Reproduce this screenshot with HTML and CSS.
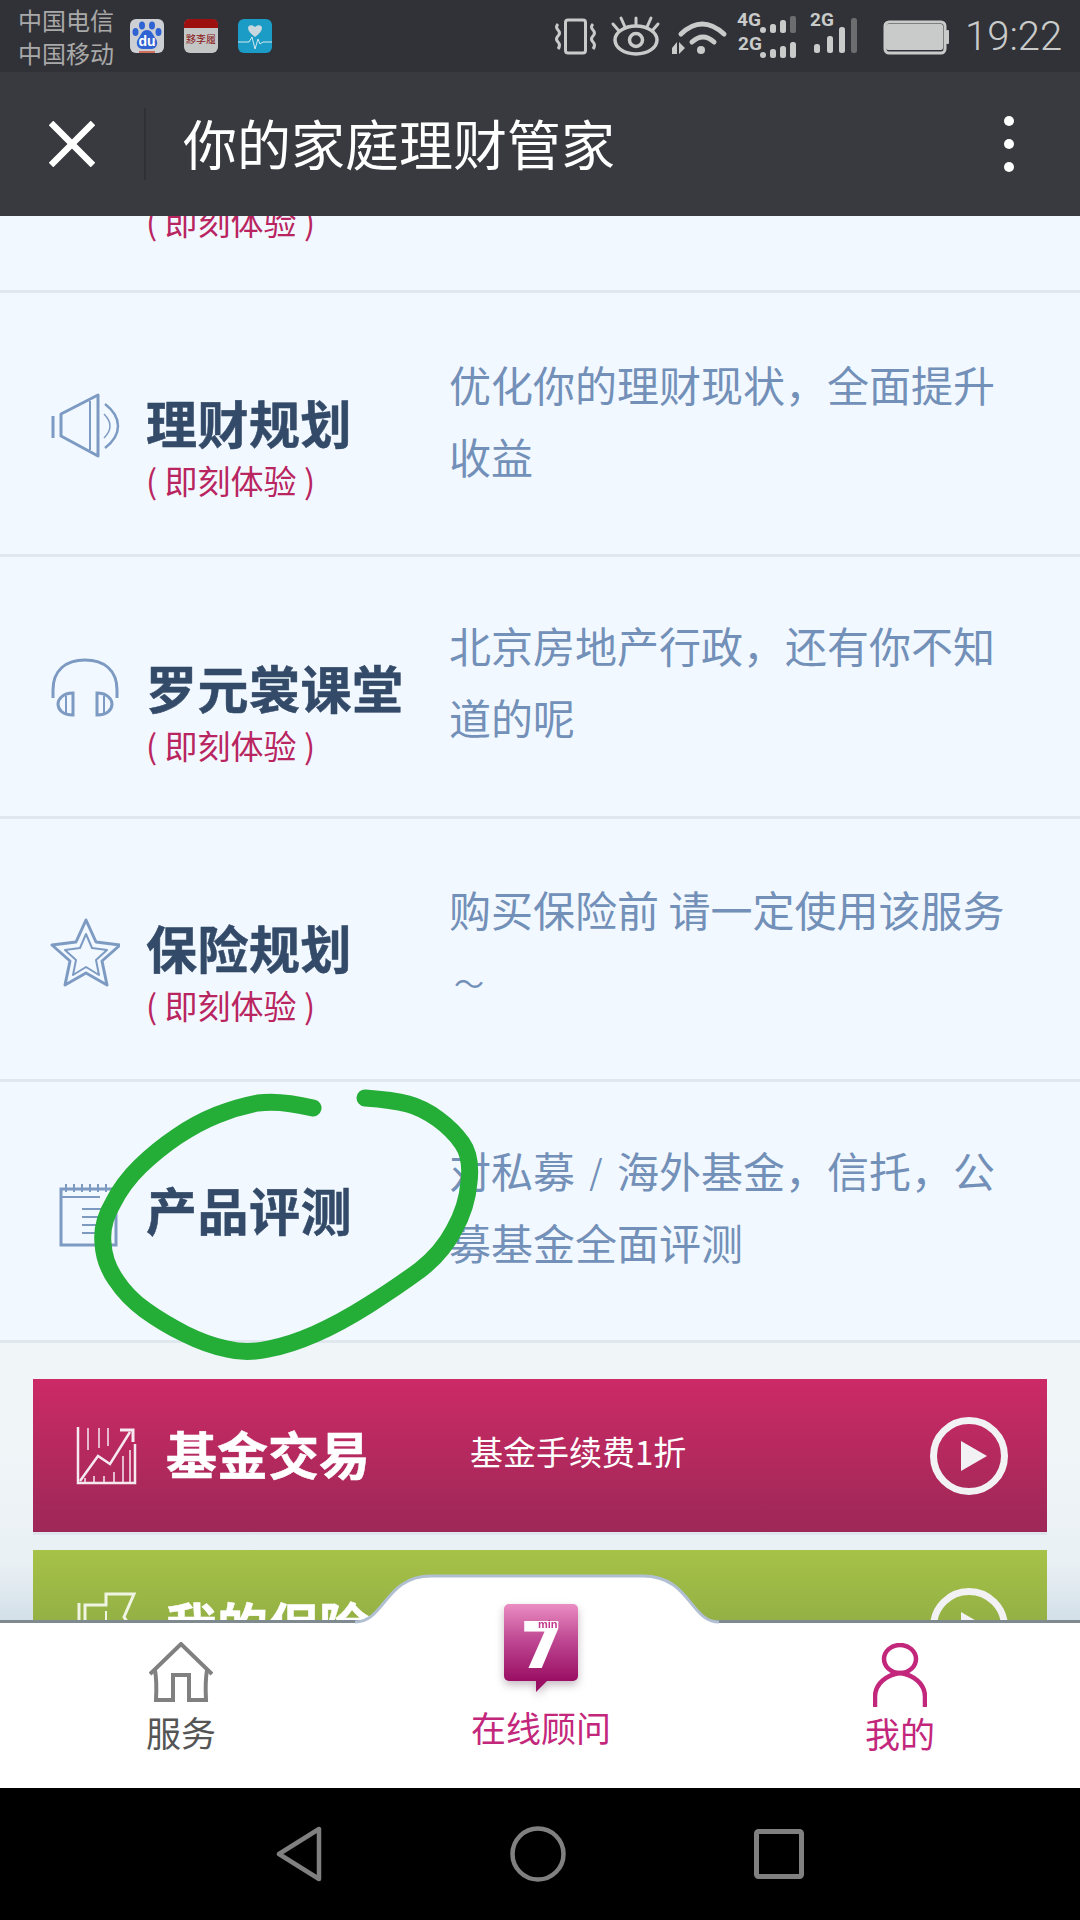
FILE: index.html
```html
<!DOCTYPE html>
<html lang="zh-CN">
<head>
<meta charset="utf-8">
<title>你的家庭理财管家</title>
<link rel="stylesheet" href="styles.css">
</head>
<body>
<div id="screen">

	<div id="statusBar">
		<div class="carrier"><span>中国电信</span><span>中国移动</span></div>
		<svg class="appIcon" viewBox="0 0 34 34">
			<rect width="34" height="34" rx="6" fill="#ccd0d4"/>
			<ellipse cx="5.5" cy="13" rx="3" ry="4" fill="#2f62d2"/>
			<ellipse cx="12" cy="6.5" rx="3" ry="4" fill="#2f62d2"/>
			<ellipse cx="22" cy="6.5" rx="3" ry="4" fill="#2f62d2"/>
			<ellipse cx="28.5" cy="13" rx="3" ry="4" fill="#2f62d2"/>
			<path d="M17 11C12 11 11 16 8 20C5 25 8 30 13 30H21C26 30 29 25 26 20C23 16 22 11 17 11Z" fill="#2f62d2"/>
			<text x="17" y="27" class="appDu">du</text>
			<rect x="9" y="32" width="16" height="2" fill="#d0705a"/>
		</svg>
		<svg class="appIcon" viewBox="0 0 34 34">
			<rect width="34" height="34" rx="6" fill="#c4c6c6"/>
			<path d="M0 9V6C0 2 2 0 6 0H28C32 0 34 2 34 6V9Z" fill="#9c1010"/>
			<text x="17" y="24" class="appCal">黟李履</text>
		</svg>
		<svg class="appIcon" viewBox="0 0 34 34">
			<rect width="34" height="34" rx="6" fill="#1a9cc6"/>
			<path d="M22 18C18 15 15 12 15 9C15 6 19 5 22 8C25 5 29 6 29 9C29 12 26 15 22 18Z" transform="translate(-5 0)" fill="#c9d8de"/>
			<path d="M0 23H11L14 18L17 30L20 20L22 25L25 23H34" fill="none" stroke="#d5e9f0" stroke-width="1"/>
		</svg>
		<div class="statusFill"></div>
		<svg class="statusIcons" viewBox="0 0 400 72">
			<g fill="none" stroke="#c9cbca" stroke-width="3">
				<rect x="15.5" y="20" width="20" height="33" rx="2.5"/>
				<path d="M8 24Q5 27 8 30Q11 33 8 36Q5 39 8 42Q11 45 8 49"/>
				<path d="M43 24Q40 27 43 30Q46 33 43 36Q40 39 43 42Q46 45 43 49"/>
				<ellipse cx="86" cy="40" rx="21" ry="14" stroke-width="3.5"/>
				<circle cx="86" cy="40" r="6.5" stroke-width="3.5"/>
				<path d="M71 18L75 27M86 18V25M101 18L97 27M63 24L69 31M108 24L102 31" stroke-width="3" stroke-linecap="round"/>
				<path d="M131 34Q152 14 174 34" stroke-width="5" stroke-linecap="round"/>
				<path d="M142 42Q153 32 164 42" stroke-width="5" stroke-linecap="round"/>
			</g>
			<g fill="#c9cbca">
				<circle cx="151" cy="50" r="4"/>
				<path d="M122 48L127 42V54H122ZM129 42L135 48L129 54Z"/>
				<text x="187" y="26" class="netType">4G</text>
				<text x="188" y="50" class="netType">2G</text>
				<text x="260" y="26" class="netType">2G</text>
				<circle cx="213" cy="30" r="3"/>
				<rect x="220" y="24" width="6" height="9" rx="2.5"/>
				<rect x="230" y="20" width="6" height="13" rx="2.5"/>
				<circle cx="213" cy="55" r="3"/>
				<rect x="220" y="49" width="6" height="9" rx="2.5"/>
				<rect x="230" y="46" width="6" height="12" rx="2.5"/>
				<rect x="240" y="42" width="6" height="16" rx="2.5"/>
				<rect x="264" y="44" width="6" height="9" rx="2.5"/>
				<rect x="277" y="36" width="6" height="17" rx="2.5"/>
				<rect x="289" y="27" width="6" height="26" rx="2.5"/>
				<rect x="336" y="24" width="57" height="26" rx="2"/>
				<rect x="396" y="30" width="3" height="14" rx="1"/>
			</g>
			<rect x="240" y="16" width="6" height="17" rx="2" fill="#6c6d6e"/>
			<rect x="301" y="18" width="6" height="35" rx="2.5" fill="#6c6d6e"/>
			<rect x="335" y="22" width="60" height="31" rx="4" fill="none" stroke="#c9cbca" stroke-width="3"/>
		</svg>
		<div class="clock">19:22</div>
	</div>

	<div id="titleBar">
		<svg class="closeIcon" viewBox="0 0 46 46"><path d="M2 2L44 44M44 2L2 44" stroke="#fff" stroke-width="6.5" fill="none"/></svg>
		<div class="titleDivider"></div>
		<div class="titleText">你的家庭理财管家</div>
		<div class="moreDots"><span></span><span></span><span></span></div>
	</div>

	<div id="content">
		<div class="row rowCut"><div class="rowTry">( 即刻体验 )</div></div>

		<div class="row">
			<svg class="rowIcon" viewBox="0 0 70 70" fill="none" stroke="#7d9bc2" stroke-width="3">
				<path d="M48 3V64L11 44V22Z" stroke-linejoin="round"/>
				<path d="M40 9V58" stroke-width="2"/>
				<path d="M3 24V46"/>
				<path d="M55 12Q68 22 68 34Q68 46 55 56" stroke-width="2.5"/>
				<path d="M54 22Q60 28 60 34Q60 40 54 46" stroke-width="1.5"/>
			</svg>
			<div class="rowHead">
				<div class="rowTitle">理财规划</div>
				<div class="rowTry">( 即刻体验 )</div>
			</div>
			<div class="rowDesc">优化你的理财现状，全面提升收益</div>
		</div>

		<div class="row rowShort">
			<svg class="rowIcon" viewBox="0 0 70 70" fill="none" stroke="#7d9bc2" stroke-width="3">
				<path d="M3 42V34C3 14 16 4 35 4C54 4 67 14 67 34V42"/>
				<path d="M23 37C12 37 8 44 8 48C8 53 12 59 23 59Z"/>
				<path d="M47 37C58 37 62 44 62 48C62 53 58 59 47 59Z"/>
				<path d="M16 40V57M54 40V57" stroke-width="2"/>
			</svg>
			<div class="rowHead">
				<div class="rowTitle">罗元裳课堂</div>
				<div class="rowTry">( 即刻体验 )</div>
			</div>
			<div class="rowDesc">北京房地产行政，还有你不知道的呢</div>
		</div>

		<div class="row rowMid">
			<svg class="rowIcon" viewBox="0 0 70 70" fill="none" stroke="#7d9bc2" stroke-width="3" stroke-linejoin="round">
				<path d="M36 2L46 24L70 27L52 43L57 67L36 55L15 67L20 43L2 27L26 24Z"/>
				<path d="M36 16L42 30L57 32L46 42L49 57L36 49L23 57L26 42L15 32L30 30Z" stroke-width="2"/>
			</svg>
			<div class="rowHead">
				<div class="rowTitle">保险规划</div>
				<div class="rowTry">( 即刻体验 )</div>
			</div>
			<div class="rowDesc">购买保险前 请一定使用该服务<span class="descTilde">～</span></div>
		</div>

		<div class="row rowLast">
			<svg class="rowIcon" viewBox="0 0 70 70" fill="none" stroke="#7d9bc2" stroke-width="3">
				<path d="M11 8H66V64H11Z"/>
				<path d="M11 16H50M32 28H60M32 36H60M32 44H60M32 52H50" stroke-width="2"/>
				<path d="M16 3V11M24 3V11M32 3V11M40 3V11M48 3V11M56 3V11" stroke-width="2"/>
			</svg>
			<div class="rowHead">
				<div class="rowTitle">产品评测</div>
			</div>
			<div class="rowDesc">对私募<span class="descSlash">/</span>海外基金，信托，公募基金全面评测</div>
		</div>

		<div class="bannerList">
			<div class="banner bannerRed">
				<svg class="bannerIcon" viewBox="0 0 60 60" fill="none" stroke="#f6e9ef" stroke-width="2.5">
					<path d="M2 1V57H59V18"/>
					<path d="M4 55L22 30L34 38L54 6"/>
					<path d="M44 4H57V16" stroke-width="3"/>
					<path d="M12 2V24M23 2V22M32 2V20M47 30V56M54 24V56M38 46V56M28 50V56M18 50V56M9 52V56" stroke-width="1.5"/>
				</svg>
				<div class="bannerTitle">基金交易</div>
				<div class="bannerSub">基金手续费1折</div>
				<svg class="playIcon" viewBox="0 0 78 78"><circle cx="39" cy="39" r="35.5" fill="none" stroke="#f2f2f4" stroke-width="7"/><path d="M31 24L57 39L31 54Z" fill="#f2f2f4"/></svg>
			</div>
			<div class="banner bannerGreen">
				<svg class="bannerIcon" viewBox="0 0 60 60" fill="none" stroke="#f0f4e2" stroke-width="3">
					<path d="M3 60V6M9 60V8H30V-3H58L48 20L60 38V60"/>
					<path d="M30 14V26" stroke-width="2"/>
				</svg>
				<div class="bannerTitle">我的保险</div>
				<div class="bannerSub">我的保单</div>
				<svg class="playIcon" viewBox="0 0 78 78"><circle cx="39" cy="39" r="35.5" fill="none" stroke="#f2f2f4" stroke-width="7"/><path d="M31 24L57 39L31 54Z" fill="#f2f2f4"/></svg>
			</div>
		</div>
	</div>

	<div id="tabBar">
		<svg class="tabBump" viewBox="0 0 400 56">
			<path d="M15 52C45 52 45 6 91 6H303C350 6 350 52 379 52V56H15Z" fill="#fff"/>
			<path d="M15 52C45 52 45 6 91 6H303C350 6 350 52 379 52" fill="none" stroke="#b1bfd2" stroke-width="3"/>
		</svg>
		<div class="tab tabHome">
			<svg class="tabIcon" viewBox="0 0 64 60" fill="none" stroke="#808080" stroke-width="4">
				<path d="M1 32L32 2L63 32"/>
				<path d="M6 28Q8 40 7 58H24V33H40V58H57Q56 40 58 28"/>
			</svg>
			<div class="tabLabel">服务</div>
		</div>
		<div class="tab tabAdvisor">
			<div class="sevenIcon">
				<div class="sevenBadge">
					<span class="sevenNum">7</span>
					<span class="sevenMin">min</span>
				</div>
			</div>
			<div class="tabLabel">在线顾问</div>
		</div>
		<div class="tab tabMine">
			<svg class="tabIcon" viewBox="0 0 54 64" fill="none" stroke="#c3277c" stroke-width="4.5">
				<ellipse cx="27" cy="16" rx="16" ry="14"/>
				<path d="M2 64V54C2 40 14 32 27 30C40 32 52 40 52 54V64"/>
			</svg>
			<div class="tabLabel">我的</div>
		</div>
	</div>

	<div id="navBar">
		<svg class="navIcon navBack" viewBox="0 0 46 56"><path d="M43 3V53L3 28Z" fill="none" stroke="#808080" stroke-width="4.5" stroke-linejoin="round"/></svg>
		<svg class="navIcon navHome" viewBox="0 0 56 56"><circle cx="28" cy="28" r="25.5" fill="none" stroke="#808080" stroke-width="4.5"/></svg>
		<svg class="navIcon navRecent" viewBox="0 0 50 50"><rect x="2.5" y="2.5" width="45" height="45" rx="2" fill="none" stroke="#808080" stroke-width="5"/></svg>
	</div>

	<!-- hand drawn circle on the screenshot -->
	<svg id="scribble" viewBox="0 0 1080 1920">
		<path d="M313 1108Q280 1100 258 1103Q237 1107 217 1115Q197 1123 177 1136.5Q157 1150 140 1166.5Q123 1183 113 1203Q101 1223 103 1243Q104 1263 116 1280Q127 1297 145 1310Q163 1323 185 1334Q207 1345 227 1349Q247 1354 268.5 1349Q290 1345 315 1334Q340 1323 368.5 1305Q397 1287 420 1270Q442 1253 454 1230Q467 1207 469 1182Q472 1157 462 1143Q453 1130 438 1119Q423 1108 408 1104Q393 1100 365 1098" fill="none" stroke="#24ad37" stroke-width="17" stroke-linecap="round" stroke-linejoin="round"/>
	</svg>
</div>
</body>
</html>
```

FILE: styles.css
```css
body
{
	margin: 0;
	background-color: #000000;
	font-family: "Noto Sans CJK SC", "Noto Sans", sans-serif;
}
#screen
{
	position: relative;
	display: flex;
	flex-direction: column;
	width: 1080px;
	height: 1920px;
	overflow: hidden;
}

/* status bar */
#statusBar
{
	display: flex;
	align-items: center;
	flex: none;
	height: 72px;
	padding-left: 18px;
	gap: 20px;
	background-color: #313237;
}
.carrier
{
	display: flex;
	flex-direction: column;
	flex: none;
	width: 96px;
	margin-right: -4px;
	font-size: 24px;
	line-height: 33px;
	white-space: nowrap;
	color: #a9a9a9;
}
.appIcon
{
	width: 34px;
	height: 34px;
	flex: none;
}
.appDu
{
	font-family: "Liberation Sans", sans-serif;
	font-size: 14px;
	font-weight: bold;
	text-anchor: middle;
	fill: #ffffff;
}
.appCal
{
	font-size: 10px;
	text-anchor: middle;
	fill: #8a1616;
}
.statusFill
{
	flex: 1;
}
.statusIcons
{
	flex: none;
	width: 400px;
	height: 72px;
}
.netType
{
	font-family: Roboto, sans-serif;
	font-size: 19px;
	font-weight: 700;
}
.clock
{
	flex: none;
	width: 130px;
	margin-left: -20px;
	padding-left: 15px;
	box-sizing: border-box;
	font-family: Roboto, sans-serif;
	font-size: 40px;
	font-weight: 300;
	color: #c9cbca;
}

/* title bar */
#titleBar
{
	display: flex;
	align-items: center;
	flex: none;
	height: 144px;
	background-color: #393a3f;
}
.closeIcon
{
	width: 46px;
	height: 46px;
	margin-left: 49px;
}
.titleDivider
{
	width: 2px;
	height: 72px;
	margin-left: 49px;
	background-color: #303135;
}
.titleText
{
	flex: 1;
	margin: -4px 0 0 37px;
	font-size: 54px;
	color: #ffffff;
}
.moreDots
{
	display: flex;
	flex-direction: column;
	gap: 13px;
	margin-right: 66px;
}
.moreDots span
{
	width: 10px;
	height: 10px;
	border-radius: 50%;
	background-color: #ffffff;
}

/* list */
#content
{
	flex: 1;
	min-height: 0;
	overflow: hidden;
	background: linear-gradient(to bottom, #f0f5f8 0%, #f0f5f8 88%, #e9f0f4 96%, #d3e0e9 100%);
}
.row
{
	display: flex;
	box-sizing: border-box;
	height: 264px;
	background-color: #f2f8ff;
	border-bottom: 3px solid #e1e7ef;
}
.rowShort
{
	height: 262px;
}
.rowMid
{
	height: 263px;
}
.rowLast
{
	height: 261px;
}
.rowCut
{
	align-items: flex-end;
	height: 77px;
	padding: 0 0 41px 146px;
}
.rowIcon
{
	flex: none;
	width: 70px;
	height: 70px;
	margin: 99px 0 0 50px;
}
.rowHead
{
	flex: none;
	width: 302px;
	margin-left: 26px;
	padding-top: 99px;
}
.rowShort .rowHead
{
	padding-top: 100px;
}
.rowMid .rowHead
{
	padding-top: 98px;
}
.rowLast .rowHead
{
	padding-top: 97px;
}
.rowTitle
{
	font-size: 51px;
	font-weight: 700;
	line-height: 60px;
	letter-spacing: 0.5px;
	-webkit-text-stroke: 0.5px #334a68;
	color: #334a68;
}
.rowTry
{
	font-size: 33px;
	line-height: 56px;
	color: #b9255f;
}
.rowDesc
{
	width: 580px;
	padding-top: 55px;
	margin-left: 1px;
	font-size: 42px;
	line-height: 72px;
	color: #7290b8;
}
.rowShort .rowDesc
{
	padding-top: 52px;
}
.rowMid .rowDesc
{
	padding-top: 54px;
}
.rowLast .rowDesc
{
	padding-top: 52px;
}
.descTilde
{
	margin-left: 5px;
	font-size: 30px;
	vertical-align: 4px;
}
.descSlash
{
	display: inline-block;
	width: 42px;
	font-size: 34px;
	line-height: 1;
	text-align: center;
	vertical-align: 3px;
}

/* banners */
.bannerList
{
	display: flex;
	flex-direction: column;
	gap: 18px;
	padding: 36px 33px 0;
}
.banner
{
	display: flex;
	align-items: center;
	flex: none;
	height: 153px;
	box-shadow: 0 3px 0 #dde6ee;
	color: #ffffff;
}
.bannerRed
{
	background: linear-gradient(to bottom, #cc2a66, #9d2857);
}
.bannerGreen
{
	background: linear-gradient(to bottom, #a6c247, #7f9c43);
}
.bannerIcon
{
	flex: none;
	width: 60px;
	height: 60px;
	margin-left: 43px;
	overflow: visible;
}
.bannerTitle
{
	flex: none;
	width: 304px;
	margin: -6px 0 0 30px;
	font-size: 51px;
	font-weight: 700;
	-webkit-text-stroke: 0.5px #ffffff;
}
.bannerSub
{
	flex: 1;
	margin-top: -10px;
	font-size: 33px;
}
.playIcon
{
	flex: none;
	width: 78px;
	height: 78px;
	margin-right: 39px;
}

/* bottom tabs */
#tabBar
{
	position: relative;
	display: grid;
	grid-template-columns: 362px 358px 360px;
	flex: none;
	box-sizing: border-box;
	height: 168px;
	background-color: #ffffff;
	border-top: 3px solid #7f8a90;
}
.tabBump
{
	position: absolute;
	left: 340px;
	top: -53px;
	width: 400px;
	height: 56px;
}
.tab
{
	position: relative;
	display: flex;
	flex-direction: column;
	align-items: center;
}
.tabHome
{
	padding-top: 19px;
}
.tabMine
{
	padding-top: 20px;
}
.tabIcon
{
	width: 64px;
	height: 60px;
}
.tabMine .tabIcon
{
	width: 54px;
	height: 64px;
}
.tabLabel
{
	margin-top: 5px;
	font-size: 35px;
	line-height: 50px;
	color: #555555;
}
.tabMine .tabLabel
{
	margin-top: 1px;
	color: #c3277c;
}
.tabAdvisor .tabLabel
{
	margin-top: 10px;
	color: #c3277c;
}
.sevenIcon
{
	position: relative;
	width: 74px;
	height: 88px;
	margin-top: -19px;
	filter: drop-shadow(0 4px 4px rgba(90, 60, 80, 0.35));
}
.sevenBadge
{
	position: relative;
	width: 74px;
	height: 77px;
	border-radius: 5px;
	background: linear-gradient(to bottom, #ea8dc2, #c04a94 45%, #9a0e63);
}
.sevenBadge::after
{
	content: "";
	position: absolute;
	left: 32px;
	top: 77px;
	border-top: 11px solid #9a0e63;
	border-right: 11px solid transparent;
}
.sevenNum
{
	position: absolute;
	left: 0;
	right: 0;
	top: 5px;
	font-family: "Noto Sans", sans-serif;
	font-size: 66px;
	font-weight: 900;
	line-height: 66px;
	text-align: center;
	color: #ffffff;
}
.sevenMin
{
	position: absolute;
	left: 34px;
	top: 15px;
	font-family: "Liberation Sans", sans-serif;
	font-size: 11px;
	font-weight: bold;
	line-height: 10px;
	color: #c3378c;
}

/* android buttons */
#navBar
{
	display: flex;
	flex: none;
	align-items: center;
	justify-content: center;
	gap: 188px;
	height: 132px;
	background-color: #000000;
}
.navBack
{
	width: 46px;
	height: 56px;
}
.navHome
{
	width: 56px;
	height: 56px;
}
.navRecent
{
	width: 50px;
	height: 50px;
}

#scribble
{
	position: absolute;
	left: 0;
	top: 0;
	width: 1080px;
	height: 1920px;
	pointer-events: none;
}
```
